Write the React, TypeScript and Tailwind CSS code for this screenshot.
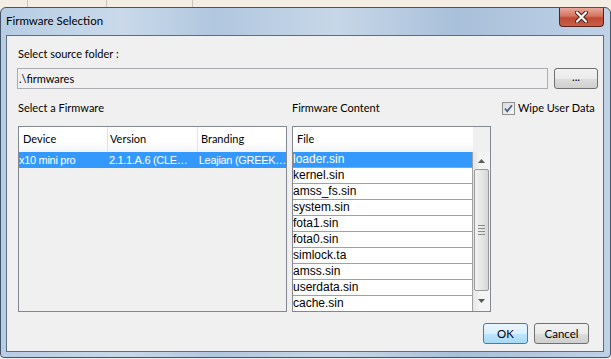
import React from 'react';

const files = [
  'loader.sin',
  'kernel.sin',
  'amss_fs.sin',
  'system.sin',
  'fota1.sin',
  'fota0.sin',
  'simlock.ta',
  'amss.sin',
  'userdata.sin',
  'cache.sin',
];

function WinButton({ label, primary, className }: { label: string; primary?: boolean; className: string }) {
  return (
    <div
      className={
        'flex items-center justify-center rounded-[3px] border text-[11.5px] text-black ' +
        (primary
          ? 'border-[#3c7fb1] bg-[linear-gradient(180deg,#eaf6fd_0%,#d9f0fc_50%,#bee6fd_51%,#a7d9f5_100%)] '
          : 'border-[#707070] bg-[linear-gradient(180deg,#f2f2f2_0%,#ebebeb_50%,#dddddd_51%,#cfcfcf_100%)] ') +
        className
      }
    >
      {label}
    </div>
  );
}

function Triangle({ up }: { up?: boolean }) {
  return (
    <svg width="7" height="4" viewBox="0 0 7 4">
      <path d={up ? 'M0 4 L3.5 0 L7 4 Z' : 'M0 0 L3.5 4 L7 0 Z'} fill="#5a5a5a" />
    </svg>
  );
}

export default function App() {
  return (
    <div className="w-[611px] h-[359px] overflow-hidden bg-[#f3ede4] pt-[7px] font-['Lato','Liberation_Sans',sans-serif] relative">
      {/* window behind */}
      <div className="absolute top-0 left-0 flex h-[7px]">
        <div className="w-[28px] border-r border-[#c9c3ba]" />
        <div className="w-[79px] border-r border-[#c9c3ba]" />
        <div className="w-[86px] border-r border-[#c9c3ba]" />
      </div>

      <div className="relative h-[351px] rounded-t-[6px] rounded-b-[4px] border border-[#44556a] bg-[linear-gradient(90deg,#b7cde4_0%,#c9d9ea_20%,#b1c7df_35%,#c7d7e8_55%,#a9c0da_75%,#bfd2e7_100%)] flex flex-col">
        {/* title bar */}
        <div className="h-[27px] flex items-start justify-between">
          <span className="pl-[5px] pt-[5px] text-[11.5px] leading-[16px] text-black">Firmware Selection</span>
          <div className="mr-[6px] w-[45px] h-[19px] rounded-b-[4px] border border-t-0 border-[#5b2218] bg-[linear-gradient(180deg,#e9a99b_0%,#d4735f_45%,#c04a33_55%,#c9604a_100%)] flex items-center justify-center">
            <svg width="13" height="12" viewBox="0 0 13 12">
              <path d="M2 1.5 L11 10.5 M11 1.5 L2 10.5" stroke="#4a1a12" strokeWidth="4" strokeLinecap="round" />
              <path d="M2 1.5 L11 10.5 M11 1.5 L2 10.5" stroke="#ffffff" strokeWidth="2.2" strokeLinecap="round" />
            </svg>
          </div>
        </div>

        {/* client area */}
        <div className="flex-1 ml-[5px] mr-[6px] mb-[5px] border border-[#5d6d80] bg-[#f0f0f0] pl-[10px] pt-[10px] text-[11px] text-black">
          <div className="ml-[1px] h-[16px] leading-[16px]">Select source folder :</div>

          <div className="mt-[6px] flex">
            <div className="w-[531px] h-[21px] border border-[#abadb3] bg-[#f0f0f0] pl-[1px] leading-[19px]">.\firmwares</div>
            <WinButton label="..." className="ml-[6px] w-[44px] h-[21px] leading-none pb-[3px]" />
          </div>

          <div className="mt-[11px] flex">
            {/* left column */}
            <div className="ml-[1px] w-[269px] flex flex-col">
              <div className="h-[16px] leading-[16px]">Select a Firmware</div>
              <div className="mt-[10px] h-[186px] border border-[#828790] bg-[#f0f0f0] flex flex-col font-['Liberation_Sans',Arial,sans-serif] text-[11px]">
                <div className="h-[25px] flex bg-[linear-gradient(180deg,#ffffff_0%,#ffffff_60%,#f3f4f6_100%)] text-[11px] font-['Lato','Liberation_Sans',sans-serif]">
                  <div className="w-[89px] border-r border-[#e3e4e6] pl-[4px] flex items-center">Device</div>
                  <div className="w-[90px] border-r border-[#e3e4e6] pl-[2px] flex items-center">Version</div>
                  <div className="flex-1 pl-[3px] flex items-center">Branding</div>
                </div>
                <div className="h-[16px] flex bg-[#3399ff] text-white leading-[16px] whitespace-nowrap tracking-[-0.3px]">
                  <div className="w-[89px] overflow-hidden">x10 mini pro</div>
                  <div className="w-[90px] pl-[1px] overflow-hidden">2.1.1.A.6 (CLE…</div>
                  <div className="flex-1 pl-[1px]">Leajian (GREEK…</div>
                </div>
              </div>
            </div>

            {/* right column */}
            <div className="ml-[5px] w-[199px] flex flex-col">
              <div className="h-[16px] leading-[16px]">Firmware Content</div>
              <div className="mt-[10px] h-[186px] border border-[#828790] bg-[#f0f0f0] flex overflow-hidden">
                <div className="w-[180px] flex flex-col">
                  <div className="h-[25px] shrink-0 flex items-center pl-[4px] bg-[linear-gradient(180deg,#ffffff_0%,#ffffff_60%,#f3f4f6_100%)]">File</div>
                  <div className="flex flex-col border-r border-[#a0a0a0] font-['Liberation_Sans',Arial,sans-serif] text-[12px]">
                    {files.map((f, i) => (
                      <div
                        key={f}
                        className={
                          'h-[16px] shrink-0 border-b border-[#a0a0a0] leading-[15px] whitespace-nowrap ' +
                          (i === 0 ? 'bg-[#3399ff] text-white' : 'bg-white text-black')
                        }
                      >
                        {f}
                      </div>
                    ))}
                  </div>
                </div>
                {/* scrollbar */}
                <div className="flex-1 flex flex-col">
                  <div className="h-[25px] shrink-0 bg-[#f0f0f0]" />
                  <div className="flex-1 flex flex-col bg-[linear-gradient(90deg,#e6e6e6_0%,#f4f4f4_40%,#f4f4f4_100%)]">
                    <div className="h-[17px] flex items-center justify-center"><Triangle up /></div>
                    <div className="mx-[1px] h-[122px] rounded-[2px] border border-[#989898] bg-[linear-gradient(90deg,#f3f3f3_0%,#e6e6e6_50%,#d6d6d6_100%)] flex flex-col items-center justify-center gap-[2px]">
                      <div className="w-[7px] h-[1px] bg-[#8a8a8a]" />
                      <div className="w-[7px] h-[1px] bg-[#8a8a8a]" />
                      <div className="w-[7px] h-[1px] bg-[#8a8a8a]" />
                      <div className="w-[7px] h-[1px] bg-[#8a8a8a]" />
                    </div>
                    <div className="flex-1 flex items-center justify-center"><Triangle /></div>
                  </div>
                </div>
              </div>
            </div>

            {/* checkbox */}
            <div className="ml-[11px] h-[16px] flex items-center">
              <div className="w-[13px] h-[13px] border border-[#8e8f8f] bg-[linear-gradient(135deg,#dcdcdc_0%,#f6f6f6_100%)] flex items-center justify-center">
                <svg width="11" height="11" viewBox="0 0 11 11">
                  <path d="M2 5.5 L4.3 8.3 L9 2.2" stroke="#4a5f8a" strokeWidth="1.8" fill="none" />
                </svg>
              </div>
              <span className="ml-[3px] leading-[16px]">Wipe User Data</span>
            </div>
          </div>

          <div className="mt-[11px] flex pl-[466px]">
            <WinButton label="OK" primary className="w-[45px] h-[21px]" />
            <WinButton label="Cancel" className="ml-[6px] w-[55px] h-[21px]" />
          </div>
        </div>
      </div>
    </div>
  );
}
